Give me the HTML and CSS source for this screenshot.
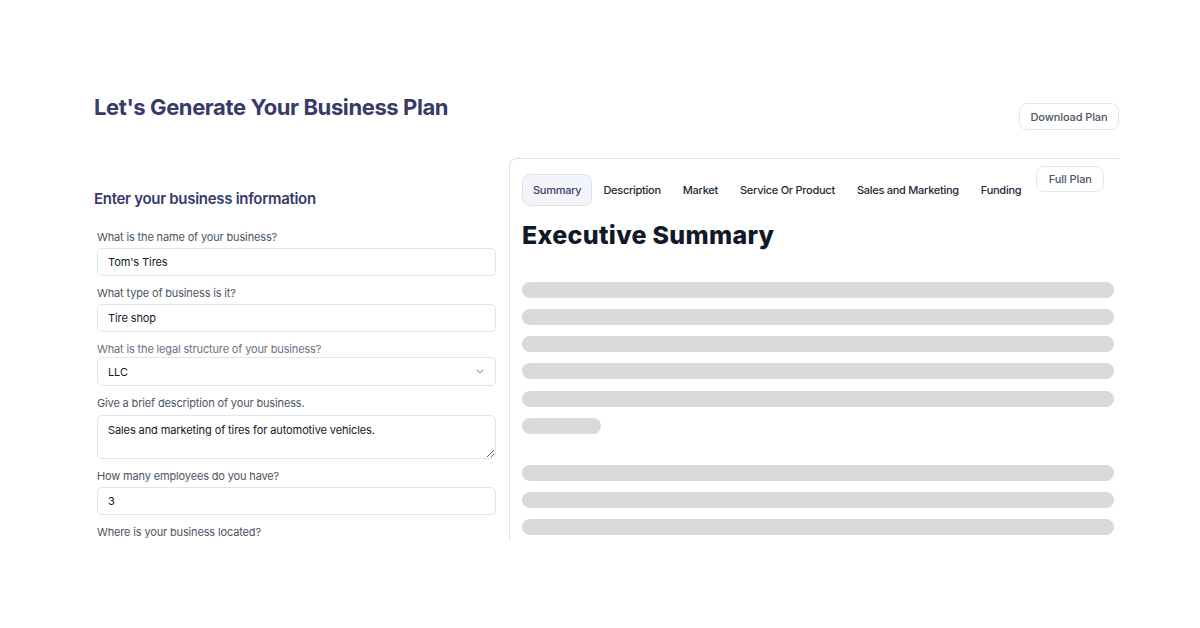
FILE: index.html
```html
<!DOCTYPE html>
<html lang="en">
<head>
<meta charset="utf-8">
<title>Business Plan Generator</title>
<link rel="stylesheet" href="styles.css">
</head>
<body>
<div class="page">
  <header class="header">
    <h1 class="title">Let's Generate Your Business Plan</h1>
    <button class="btn btn-download">Download Plan</button>
  </header>
  <div class="columns">
    <section class="left">
      <h2 class="subtitle">Enter your business information</h2>
      <form class="form">
        <div class="field">
          <label class="label">What is the name of your business?</label>
          <input class="input" type="text" value="Tom's Tires">
        </div>
        <div class="field">
          <label class="label">What type of business is it?</label>
          <input class="input" type="text" value="Tire shop">
        </div>
        <div class="field field-select">
          <label class="label label-light">What is the legal structure of your business?</label>
          <div class="select-wrap">
            <select class="input select"><option>LLC</option></select>
            <svg class="chevron" width="8" height="5" viewBox="0 0 8 5"><path d="M1 1l3 3 3-3" fill="none" stroke="#a3a8b3" stroke-width="1.1" stroke-linecap="round" stroke-linejoin="round"/></svg>
          </div>
        </div>
        <div class="field field-textarea">
          <label class="label">Give a brief description of your business.</label>
          <textarea class="input textarea">Sales and marketing of tires for automotive vehicles.</textarea>
        </div>
        <div class="field">
          <label class="label">How many employees do you have?</label>
          <input class="input" type="text" value="3">
        </div>
        <div class="field">
          <label class="label">Where is your business located?</label>
          <input class="input" type="text" value="">
        </div>
      </form>
    </section>
    <section class="panel">
      <div class="panel-top">
        <nav class="tabs">
          <span class="tab active">Summary</span>
          <span class="tab">Description</span>
          <span class="tab">Market</span>
          <span class="tab">Service Or Product</span>
          <span class="tab">Sales and Marketing</span>
          <span class="tab">Funding</span>
        </nav>
        <button class="btn btn-full">Full Plan</button>
      </div>
      <h2 class="doc-title">Executive Summary</h2>
      <div class="skeleton-group">
        <div class="bar"></div>
        <div class="bar"></div>
        <div class="bar"></div>
        <div class="bar"></div>
        <div class="bar"></div>
        <div class="bar bar-short"></div>
      </div>
      <div class="skeleton-group">
        <div class="bar"></div>
        <div class="bar"></div>
        <div class="bar"></div>
        <div class="bar"></div>
      </div>
    </section>
  </div>
</div>
</body>
</html>
```

FILE: styles.css
```css
* { box-sizing: border-box; }
html, body { margin: 0; padding: 0; background: #ffffff; }
body { font-family: Inter, "Noto Sans", "Liberation Sans", sans-serif; color: #111827; }

.page {
  width: 1119px;
  height: 541px;
  overflow: hidden;
  padding: 94px 0 0 94px;
}

.header {
  display: flex;
  justify-content: space-between;
  align-items: flex-start;
  height: 64px;
}
.title {
  margin: 0;
  font-size: 22px;
  font-weight: 700;
  line-height: 27px;
  color: #373a6b;
  letter-spacing: -0.4px;
}

.btn {
  font-family: Inter, "Noto Sans", "Liberation Sans", sans-serif;
  font-size: 11px;
  font-weight: 500;
  color: #4b5563;
  background: #fff;
  border: 1px solid #e5e7eb;
  border-radius: 8px;
  cursor: pointer;
  white-space: nowrap;
  letter-spacing: -0.1px;
}
.btn-download {
  margin-top: 9px;
  height: 27px;
  width: 100px;
  padding: 0;
}

.columns {
  display: flex;
  gap: 13px;
  align-items: flex-start;
}

.left {
  width: 402px;
  flex: none;
  padding-top: 32px;
}
.subtitle {
  margin: 0 0 21px;
  font-size: 15px;
  font-weight: 600;
  line-height: 18px;
  color: #373a6b;
  letter-spacing: -0.3px;
}
.form { padding-left: 3px; }
.field { margin-bottom: 9px; }
.label {
  display: block;
  font-size: 11px;
  line-height: 16px;
  color: #4b5563;
  margin-bottom: 3px;
  letter-spacing: -0.15px;
}
.label-light { color: #6b7280; }
.field-select .label { margin-bottom: 0; }
.field-textarea .label { margin-bottom: 4px; }

.input {
  display: block;
  width: 399px;
  height: 28px;
  padding: 0 10px;
  font-family: Inter, "Noto Sans", "Liberation Sans", sans-serif;
  font-size: 11px;
  letter-spacing: -0.1px;
  color: #111827;
  background: #fff;
  border: 1px solid #e2e4ea;
  border-radius: 5px;
  outline: none;
}
.select-wrap { position: relative; width: 399px; }
.select {
  appearance: none;
  -webkit-appearance: none;
  height: 29px;
}
.chevron {
  position: absolute;
  right: 12px;
  top: 12px;
}
.textarea {
  height: 44px;
  padding: 7px 10px;
  line-height: 14px;
  resize: vertical;
}

.panel {
  flex: none;
  width: 610px;
  height: 400px;
  border-top: 1px solid #dcdfee;
  border-left: 1px solid #dcdfee;
  border-radius: 8px 0 0 0;
  padding: 7px 5px 0 12px;
}
.panel-top {
  display: flex;
  align-items: flex-start;
  gap: 4px;
}
.tabs {
  display: flex;
  margin-top: 8px;
  flex: none;
}
.tab {
  display: flex;
  align-items: center;
  height: 32px;
  padding: 0 10px;
  font-size: 11px;
  font-weight: 500;
  color: #1f2937;
  border: 1px solid transparent;
  border-radius: 8px;
  white-space: nowrap;
  letter-spacing: -0.27px;
}
.tab.active {
  background: #f3f5fa;
  border-color: #e0e3ee;
  color: #3b3e6e;
}
.btn-full {
  flex: none;
  height: 26px;
  width: 68px;
  padding: 0;
}

.doc-title {
  margin: 15px 0 0;
  font-size: 25px;
  font-weight: 800;
  line-height: 29px;
  color: #111827;
  letter-spacing: 0.3px;
}

.skeleton-group {
  display: flex;
  flex-direction: column;
  gap: 11.3px;
  margin-top: 31.5px;
}
.skeleton-group + .skeleton-group { margin-top: 30.7px; }
.bar {
  height: 16px;
  border-radius: 8px;
  background: #d9d9d9;
}
.bar-short { width: 79px; }
```
